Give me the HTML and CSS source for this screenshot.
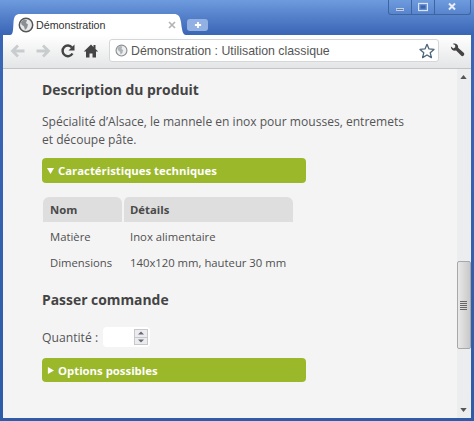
FILE: index.html
```html
<!DOCTYPE html>
<html lang="fr">
<head>
<meta charset="utf-8">
<title>Démonstration</title>
<link rel="stylesheet" href="styles.css">
</head>
<body>
<div class="window">
  <div class="titlebar">
    <div class="tab">
      <svg class="globe" viewBox="0 0 16 16"><circle cx="8" cy="8" r="6.700" fill="#e6e8ea" stroke="#555" stroke-width="1.500"/><path d="M3 5l3-2.500 3 .5-1 3 2 1.500-1 3.500-2 2-1-3.500-2.500-2z" fill="#8a8f94"/></svg>
      <span class="tab-title">Démonstration</span>
      <svg class="tab-close" viewBox="0 0 8 8"><path d="M1 1l6 6M7 1l-6 6" stroke="#b4b4b4" stroke-width="1.700"/></svg>
    </div>
    <div class="newtab"><svg viewBox="0 0 9 9"><path d="M4.500 1v7M1 4.500h7" stroke="#fff" stroke-width="2"/></svg></div>
    <div class="winctl">
      <div class="wbtn wmin"><svg viewBox="0 0 10 10"><path d="M1 7.500h8" stroke="#e8eef8" stroke-width="2.400"/><path d="M1.500 7.500h7" stroke="#4a5f7a" stroke-width=".8"/></svg></div>
      <div class="wbtn wmax"><svg viewBox="0 0 12 10"><rect x=".7" y=".7" width="10.600" height="8.600" fill="none" stroke="#dfe8f4" stroke-width="1.300"/><rect x="3" y="3" width="6" height="4" fill="#3d64a8"/></svg></div>
      <div class="wbtn wclose"><svg viewBox="0 0 10 10"><path d="M2 1.500l6 6M8 1.500l-6 6" stroke="#e8eef8" stroke-width="2"/></svg></div>
    </div>
  </div>
  <div class="toolbar">
    <svg class="tool" viewBox="0 0 16 16"><path d="M8 2.500L2.500 8 8 13.500M3 8h11.500" fill="none" stroke="#c9ccce" stroke-width="2.800"/></svg>
    <svg class="tool" viewBox="0 0 16 16"><path d="M8 2.500L13.500 8 8 13.500M13 8H1.500" fill="none" stroke="#c9ccce" stroke-width="2.800"/></svg>
    <svg class="tool" viewBox="0 0 16 16"><path d="M12.500 10.500A5.300 5.300 0 1 1 12 4.500" fill="none" stroke="#444" stroke-width="2.400"/><path d="M14.500 1.500v6h-6z" fill="#444"/></svg>
    <svg class="tool" viewBox="0 0 16 16"><path d="M8 1.500L.8 8.500h2.200v6h3.500v-4h3v4H13v-6h2.200L12.500 5.900V2H10.500v2z" fill="#444"/></svg>
    <div class="omnibox">
      <svg class="globe omni-globe" viewBox="0 0 16 16"><circle cx="8" cy="8" r="6.700" fill="#eceeef" stroke="#8a8e92" stroke-width="1.400"/><path d="M3 5l3-2.500 3 .5-1 3 2 1.500-1 3.500-2 2-1-3.500-2.500-2z" fill="#b0b4b8"/></svg>
      <span class="url">Démonstration : Utilisation classique</span>
      <svg class="star" viewBox="0 0 16 16"><path d="M8 1.300l2 4.600 5 .5-3.800 3.300 1.200 4.900L8 12l-4.400 2.600 1.200-4.900L1 6.400l5-.5z" fill="#fff" stroke="#4f6478" stroke-width="1.300" stroke-linejoin="round"/></svg>
    </div>
    <svg class="wrench" viewBox="0 0 16 16"><path d="M1 3.700L3.600 5.800 5.600 4.600 5.400 2 3 1C5 -.2 8 .8 8.600 3.500c.1.700.1 1 0 1.600l6 5.200c.9.900.8 2.300 0 3.100-.8.800-2 .8-2.800 0L6.500 8C3.700 8.700.6 6.800 1 3.700z" fill="#444"/></svg>
  </div>
  <div class="viewport">
    <main class="page">
      <h2 class="heading">Description du produit</h2>
      <p class="lead">Spécialité d’Alsace, le mannele en inox pour mousses, entremets et découpe pâte.</p>
      <div class="accordion"><svg class="arrow" viewBox="0 0 8 8"><path d="M0 1h8L4 8z" fill="#fff"/></svg>Caractéristiques techniques</div>
      <table class="specs">
        <thead><tr><th>Nom</th><th>Détails</th></tr></thead>
        <tbody>
          <tr><td>Matière</td><td>Inox alimentaire</td></tr>
          <tr><td>Dimensions</td><td>140x120 mm, hauteur 30 mm</td></tr>
        </tbody>
      </table>
      <h2 class="heading order">Passer commande</h2>
      <div class="qty">
        <label class="qty-label">Quantité :</label>
        <div class="spin">
          <div class="spin-btns">
            <div class="spin-btn"><svg viewBox="0 0 6 4"><path d="M3 .5L6 3.500H0z" fill="#667"/></svg></div>
            <div class="spin-btn"><svg viewBox="0 0 6 4"><path d="M3 3.500L6 .5H0z" fill="#667"/></svg></div>
          </div>
        </div>
      </div>
      <div class="accordion options"><svg class="arrow" viewBox="0 0 8 8"><path d="M1 0v8l7-4z" fill="#fff"/></svg>Options possibles</div>
    </main>
    <div class="scrollbar">
      <div class="sb-btn"><svg viewBox="0 0 8 5"><path d="M4 0l4 5H0z" fill="#555"/></svg></div>
      <div class="sb-track"><div class="sb-thumb"><span class="grip"></span></div></div>
      <div class="sb-btn"><svg viewBox="0 0 8 5"><path d="M4 5l4-5H0z" fill="#555"/></svg></div>
    </div>
  </div>
</div>
</body>
</html>
```
FILE: styles.css
```css
* { box-sizing: border-box; }
html, body { margin: 0; height: 100%; }
body { width: 474px; height: 421px; overflow: hidden; font-family: "Open Sans", sans-serif; }
.window { width: 474px; height: 421px; display: flex; flex-direction: column; padding: 0 3.500px 3px 3px; background: linear-gradient(#6e9ade 0, #3a66b6 34px, #2f5ca8 100%); }
.titlebar { height: 35px; flex: none; display: flex; align-items: flex-end; padding-left: 7px; position: relative; }
.tab { width: 176px; height: 21px; background: #fff; clip-path: path("M0 21C3 21 3 17 3.500 8 4 2 6 0 10 0H164C168 0 170 2 171 8 172 17 173 21 176 21Z"); display: flex; align-items: center; padding: 0 9px 0 8px; }
.globe { width: 16px; height: 16px; flex: none; }
.tab-title { font: 10.700px "Liberation Sans", sans-serif; color: #333; margin-left: 2px; flex: 1; }
.tab-close { width: 8px; height: 8px; margin-right: 1px; }
.newtab { width: 21px; height: 12px; margin: 0 0 4px 1px; background: #93b0e2; border-radius: 3px; display: flex; align-items: center; justify-content: center; }
.newtab svg { width: 8px; height: 8px; }
.winctl { position: absolute; right: 0; top: 0; height: 15px; display: flex; border: 1px solid #3d659f; border-top: 0; border-radius: 0 0 3px 3px; }
.wbtn { height: 14px; display: flex; align-items: center; justify-content: center; border-left: 1px solid #3d659f; }
.wbtn:first-child { border-left: 0; }
.wbtn svg { width: 10px; height: 10px; }
.wmin { width: 22px; } .wmax { width: 23px; } .wclose { width: 36px; }
.toolbar { height: 34px; flex: none; display: flex; align-items: center; background: linear-gradient(#fff, #e4e5e6); border-bottom: 1px solid #c2c3c4; padding: 0 0 2px 7px; }
.tool { width: 16px; height: 16px; margin-right: 9px; flex: none; }
.tool:nth-of-type(3) { margin-right: 7px; }
.omnibox { width: 330px; height: 23px; background: #fff; border: 1px solid #d4d6d8; border-radius: 3px; display: flex; align-items: center; padding: 0 3px 0 5px; margin-left: 1px; }
.omni-globe { width: 13px; height: 13px; margin-right: 3px; }
.url { font: 12.330px "Liberation Sans", sans-serif; color: #555; flex: 1; white-space: nowrap; }
.star { width: 16px; height: 16px; }
.wrench { width: 15px; height: 15px; margin-left: 11px; flex: none; }
.viewport { flex: 1; min-height: 0; display: flex; background: #f4f4f5; overflow: hidden; }
.page { flex: 1; min-width: 0; padding: 11px 0 0 39px; color: #555; font-size: 12.070px; }
.heading { margin: 0; font-size: 13.900px; line-height: 20px; font-weight: 700; color: #444; }
.lead { margin: 13px 0 0; width: 368px; line-height: 18px; }
.accordion { width: 264px; height: 25px; margin-top: 9px; background: #9ab82a; border-radius: 4px; color: #fff; font-weight: 700; font-size: 11.350px; line-height: 25px; padding-left: 5px; display: flex; align-items: center; }
.arrow { width: 7px; height: 7px; margin-right: 4px; }
.specs { margin: 14px 0 0 1px; width: 250px; table-layout: fixed; border-collapse: separate; border-spacing: 0; white-space: nowrap; font-size: 11.300px; }
.specs th { height: 25px; padding: 0 7px; background: #dedede; color: #4a4a4a; text-align: left; border-radius: 6px 6px 0 0; border-left: 2px solid #f4f4f5; font-size: 11.300px; }
.specs th:first-child { border-left: 0; width: 79px; }
.specs td { height: 26px; padding: 2px 7px 0; color: #4f4f4f; }
.specs td + td { padding-left: 8px; }
.specs th + th { padding-left: 6px; }
.order { margin-top: 16px; }
.qty { display: flex; align-items: center; margin-top: 17px; height: 20px; font-size: 12.200px; }
.qty-label { margin-right: 5px; }
.spin { width: 47px; height: 20px; background: #fff; border-radius: 4px; display: flex; justify-content: flex-end; align-items: center; padding-right: 2px; }
.spin-btns { width: 14px; height: 16px; display: flex; flex-direction: column; border: 1px solid #c5c8cc; }
.spin-btn { flex: 1; display: flex; align-items: center; justify-content: center; background: #ececee; }
.spin-btn svg { width: 6px; height: 4px; }
.spin-btn + .spin-btn { border-top: 1px solid #c5c8cc; }
.options { margin-top: 11px; height: 24px; }
.scrollbar { width: 14px; flex: none; display: flex; flex-direction: column; background: #ecedee; }
.sb-btn { height: 16px; display: flex; align-items: center; justify-content: center; }
.sb-btn svg { width: 7px; height: 4px; }
.sb-track { flex: 1; display: flex; flex-direction: column; justify-content: flex-end; padding-bottom: 53px; }
.sb-thumb { height: 88px; border: 1px solid #a8a8a8; border-radius: 2px; background: linear-gradient(90deg, #e8e8e8, #c9c9c9); display: flex; align-items: center; justify-content: center; }
.grip { width: 7px; height: 9px; background: repeating-linear-gradient(#666 0 1px, transparent 1px 2px); }
```
